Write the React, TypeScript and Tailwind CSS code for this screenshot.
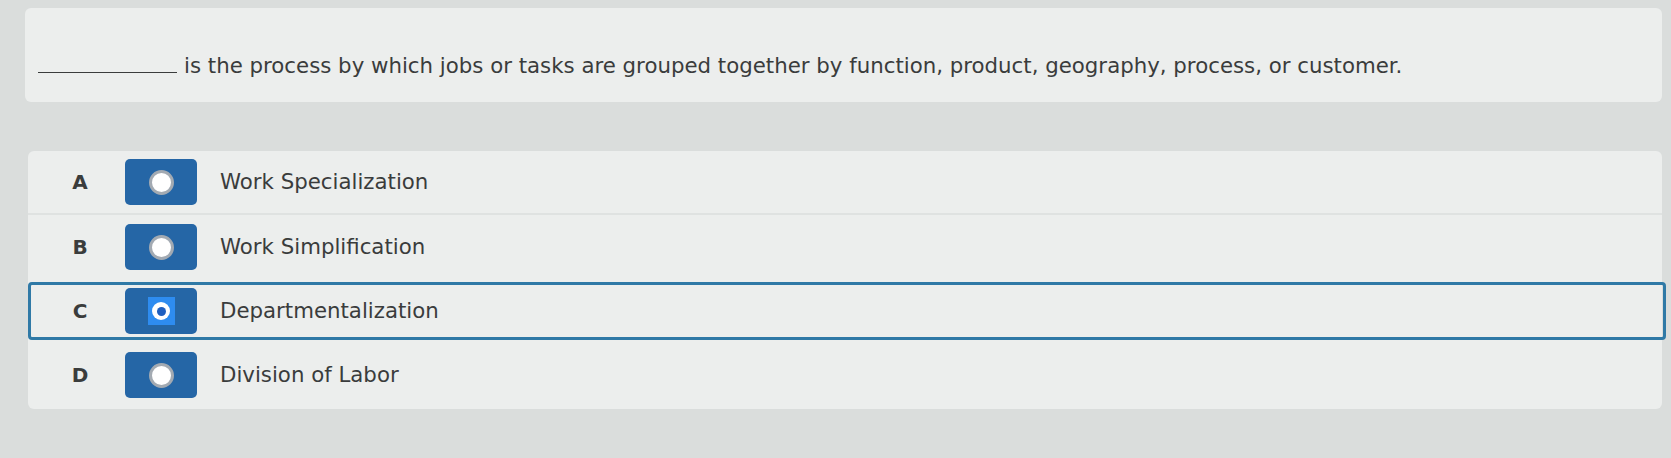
import React from 'react';

interface Choice {
    letter: string;
    label: string;
    selected?: boolean;
}

const choices: Choice[] = [
    { letter: 'A', label: 'Work Specialization' },
    { letter: 'B', label: 'Work Simplification' },
    { letter: 'C', label: 'Departmentalization', selected: true },
    { letter: 'D', label: 'Division of Labor' },
];

function RadioButton({ selected }: { selected?: boolean }) {
    return (
        <div className="w-[72px] h-[46px] rounded-[5px] bg-[#2566a6] flex items-center justify-center shrink-0">
            {selected ? (
                <div className="w-[27px] h-[28px] bg-[#2e8cf0] flex items-center justify-center">
                    <div className="w-[18px] h-[18px] rounded-full bg-white flex items-center justify-center">
                        <div className="w-[9px] h-[9px] rounded-full bg-[#1f5fc0]" />
                    </div>
                </div>
            ) : (
                <div className="w-[25px] h-[25px] rounded-full bg-white border-[3px] border-[#a3aab2]" />
            )}
        </div>
    );
}

export default function App() {
    return (
        <div
            className="w-[1671px] h-[458px] overflow-hidden bg-[#dadddc] pt-[8px] pl-[25px] pr-[9px] text-[#3a3c3c]"
            style={{ fontFamily: '"DejaVu Sans", Verdana, sans-serif' }}
        >
            {/* Question */}
            <div className="h-[94px] rounded-md bg-[#eceeed] flex items-center pl-[13px] pt-[22px]">
                <span className="inline-block w-[139px] border-b-[1.5px] border-[#3a3c3c] mr-[7px] translate-y-[6px]" />
                <span className="text-[21.3px]">
                    is the process by which jobs or tasks are grouped together by function, product, geography, process, or customer.
                </span>
            </div>

            {/* Choices */}
            <div className="mt-[49px] ml-[3px] rounded-md bg-[#eceeed] flex flex-col pb-[2px]">
                {choices.map((c, i) => (
                    <div key={c.letter} className={`h-[64px] flex items-center ${i === 0 ? 'border-b-[2px] border-[#dfe2e1]' : ''}`}>
                        <div
                            className={`flex-1 flex items-center rounded-[4px] ${
                                c.selected
                                    ? 'h-[58px] border-[3px] border-[#2f79a6] -mr-[4px] pl-[38px]'
                                    : 'h-full pl-[41px]'
                            }`}
                        >
                            <span className="w-[22px] text-center text-[20px] font-bold">{c.letter}</span>
                            <div className="ml-[34px]">
                                <RadioButton selected={c.selected} />
                            </div>
                            <span className="ml-[23px] text-[21.3px]">{c.label}</span>
                        </div>
                    </div>
                ))}
            </div>
        </div>
    );
}
